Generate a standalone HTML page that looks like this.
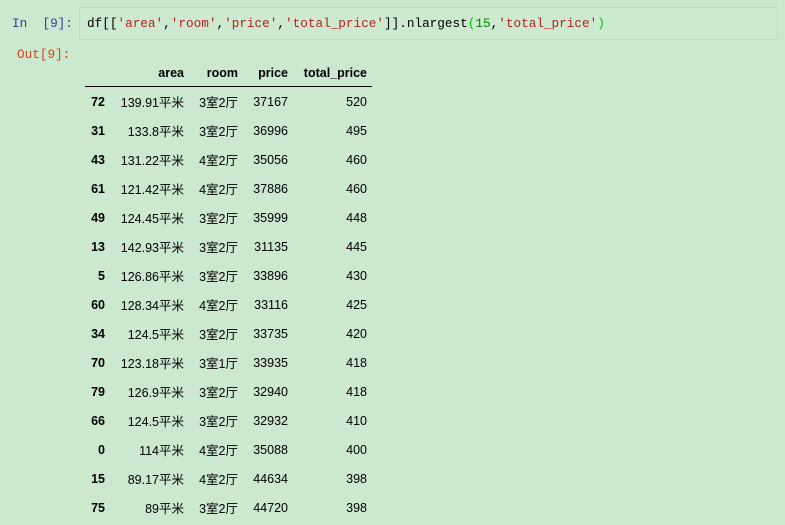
<!DOCTYPE html>
<html><head><meta charset="utf-8"><style>
body{margin:0;background:#cce8cf;width:785px;height:525px;overflow:hidden;position:relative;font-family:"Liberation Sans","Noto Sans CJK SC",sans-serif;}
.pr{position:absolute;font-family:"Liberation Mono",monospace;font-size:12.7px;}
#in{left:12px;top:16px;color:#303f9f;}
#out{left:17px;top:47px;color:#d84315;}
#box{position:absolute;left:79px;top:7px;width:697px;height:31px;border:1px solid #c6d6c8;border-radius:2px;background:#cde9d0;}
#code{position:absolute;left:7px;top:8px;font-family:"Liberation Mono",monospace;font-size:12.7px;color:#000;white-space:pre;}
.s{color:#ba2121}.n{color:#080}.p{color:#0c0}
table{position:absolute;left:85px;top:59px;border-collapse:collapse;table-layout:fixed;width:287px;font-size:12.5px;color:#000;}
th,td{padding:0 5px;text-align:right;height:29px;white-space:nowrap;overflow:visible}
thead th{height:27px;border-bottom:1px solid #000;}
tbody th{font-weight:bold}
</style></head><body>
<div class="pr" id="in">In&nbsp;&nbsp;[9]:</div>
<div id="box"><div id="code">df[[<span class="s">'area'</span>,<span class="s">'room'</span>,<span class="s">'price'</span>,<span class="s">'total_price'</span>]].nlargest<span class="p">(</span><span class="n">15</span>,<span class="s">'total_price'</span><span class="p">)</span></div></div>
<div class="pr" id="out">Out[9]:</div>
<table>
<colgroup><col style="width:25px"><col style="width:79px"><col style="width:54px"><col style="width:50px"><col style="width:79px"></colgroup>
<thead><tr><th></th><th>area</th><th>room</th><th>price</th><th>total_price</th></tr></thead>
<tbody>
<tr><th>72</th><td>139.91平米</td><td>3室2厅</td><td>37167</td><td>520</td></tr>
<tr><th>31</th><td>133.8平米</td><td>3室2厅</td><td>36996</td><td>495</td></tr>
<tr><th>43</th><td>131.22平米</td><td>4室2厅</td><td>35056</td><td>460</td></tr>
<tr><th>61</th><td>121.42平米</td><td>4室2厅</td><td>37886</td><td>460</td></tr>
<tr><th>49</th><td>124.45平米</td><td>3室2厅</td><td>35999</td><td>448</td></tr>
<tr><th>13</th><td>142.93平米</td><td>3室2厅</td><td>31135</td><td>445</td></tr>
<tr><th>5</th><td>126.86平米</td><td>3室2厅</td><td>33896</td><td>430</td></tr>
<tr><th>60</th><td>128.34平米</td><td>4室2厅</td><td>33116</td><td>425</td></tr>
<tr><th>34</th><td>124.5平米</td><td>3室2厅</td><td>33735</td><td>420</td></tr>
<tr><th>70</th><td>123.18平米</td><td>3室1厅</td><td>33935</td><td>418</td></tr>
<tr><th>79</th><td>126.9平米</td><td>3室2厅</td><td>32940</td><td>418</td></tr>
<tr><th>66</th><td>124.5平米</td><td>3室2厅</td><td>32932</td><td>410</td></tr>
<tr><th>0</th><td>114平米</td><td>4室2厅</td><td>35088</td><td>400</td></tr>
<tr><th>15</th><td>89.17平米</td><td>4室2厅</td><td>44634</td><td>398</td></tr>
<tr><th>75</th><td>89平米</td><td>3室2厅</td><td>44720</td><td>398</td></tr>
</tbody></table>
</body></html>
